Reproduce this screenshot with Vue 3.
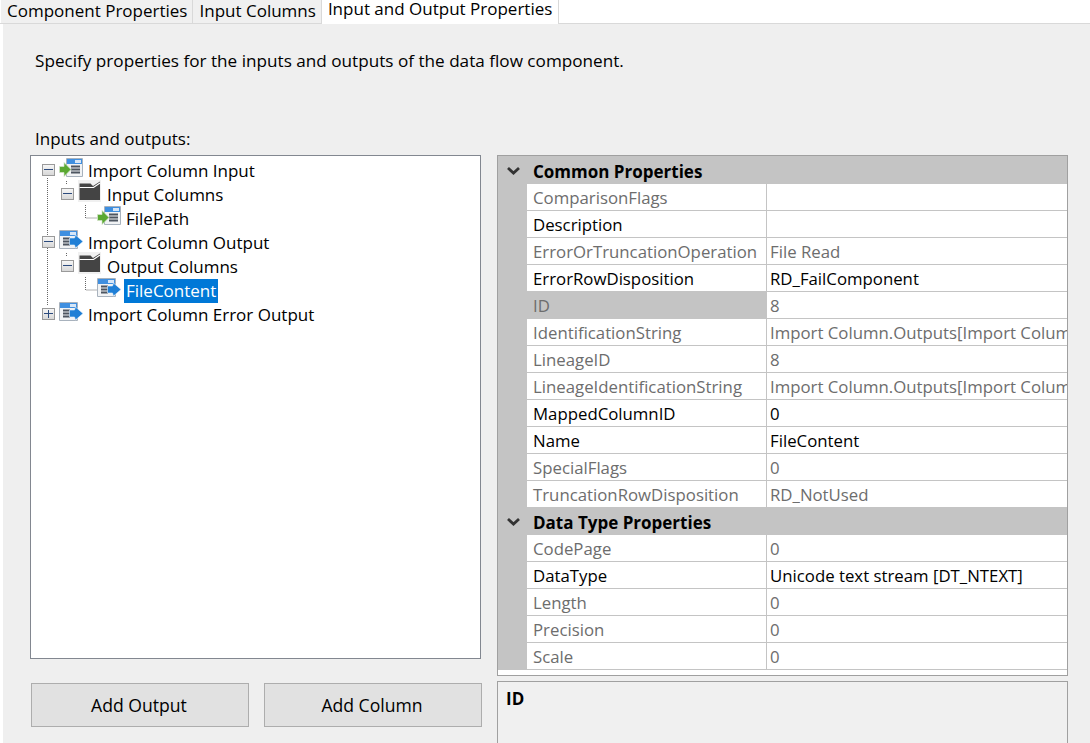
<script setup>
const tabs = [
  { label: 'Component Properties' },
  { label: 'Input Columns' },
  { label: 'Input and Output Properties', active: true }
]

const tree = [
  { label: 'Import Column Input', depth: 0, toggle: '-', icon: 'input' },
  { label: 'Input Columns', depth: 1, toggle: '-', icon: 'folder' },
  { label: 'FilePath', depth: 2, icon: 'input' },
  { label: 'Import Column Output', depth: 0, toggle: '-', icon: 'output' },
  { label: 'Output Columns', depth: 1, toggle: '-', icon: 'folder' },
  { label: 'FileContent', depth: 2, icon: 'output', selected: true },
  { label: 'Import Column Error Output', depth: 0, toggle: '+', icon: 'output' }
]

const groups = [
  {
    title: 'Common Properties',
    rows: [
      { name: 'ComparisonFlags', value: '', off: true },
      { name: 'Description', value: '' },
      { name: 'ErrorOrTruncationOperation', value: 'File Read', off: true },
      { name: 'ErrorRowDisposition', value: 'RD_FailComponent' },
      { name: 'ID', value: '8', off: true, current: true },
      { name: 'IdentificationString', value: 'Import Column.Outputs[Import Column Output].Columns[FileContent]', off: true },
      { name: 'LineageID', value: '8', off: true },
      { name: 'LineageIdentificationString', value: 'Import Column.Outputs[Import Column Output].Columns[FileContent]', off: true },
      { name: 'MappedColumnID', value: '0' },
      { name: 'Name', value: 'FileContent' },
      { name: 'SpecialFlags', value: '0', off: true },
      { name: 'TruncationRowDisposition', value: 'RD_NotUsed', off: true }
    ]
  },
  {
    title: 'Data Type Properties',
    rows: [
      { name: 'CodePage', value: '0', off: true },
      { name: 'DataType', value: 'Unicode text stream [DT_NTEXT]' },
      { name: 'Length', value: '0', off: true },
      { name: 'Precision', value: '0', off: true },
      { name: 'Scale', value: '0', off: true }
    ]
  }
]
</script>

<template>
  <div class="page">
    <div class="tabs">
      <div v-for="tab in tabs" :key="tab.label" class="tab" :class="{ active: tab.active }">{{ tab.label }}</div>
    </div>

    <div class="body">
      <p class="intro">Specify properties for the inputs and outputs of the data flow component.</p>

      <div class="columns">
        <div class="left">
          <div class="caption">Inputs and outputs:</div>
          <div class="tree">
            <svg class="lines" width="120" height="170" fill="none" stroke="#666" stroke-dasharray="1 1">
              <path d="M16.500 22V149" />
              <path d="M35.500 25V28" />
              <path d="M54.500 49V62H66" />
              <path d="M35.500 97V100" />
              <path d="M54.500 121V134H66" />
            </svg>
            <div v-for="item in tree" :key="item.label" class="node" :style="{ paddingLeft: 11 + item.depth * 19 + 'px' }">
              <span v-if="item.toggle" class="toggle">
                <i class="dash"></i>
                <i v-if="item.toggle === '+'" class="bar"></i>
              </span>
              <span v-else class="no-toggle"></span>

              <svg v-if="item.icon === 'folder'" class="icon" width="25" height="24" viewBox="0 0 25 24">
                <path d="M0 1h23v22H0z" fill="#f0f0f0" />
                <path d="M1.500 21V4.500h11L15 7l7-4.500V21z" fill="#444" />
                <path d="M1.500 8.500H15.500L22 4" fill="none" stroke="#fff" stroke-width="1.200" />
              </svg>
              <svg v-else-if="item.icon === 'input'" class="icon" width="25" height="24" viewBox="0 0 25 24">
                <path d="M7.500 3.500h16v18h-16z" fill="#f1f3f5" stroke="#a8b2bd" />
                <path d="M8 4h15v5H8z" fill="#3f8fe0" />
                <path d="M16 5h6v3h-6z" fill="#d5e6f8" />
                <path d="M12 11.500h9M12 14.500h9M12 17.500h9" stroke="#4d5560" stroke-width="2" />
                <path d="M.5 11.500h4.500V7.500l7 7-7 7v-4H.5z" fill="#5aa832" stroke="#d6e4cb" stroke-width=".7" />
              </svg>
              <svg v-else class="icon" width="25" height="24" viewBox="0 0 25 24">
                <path d="M.5 3.500h18v18H.5z" fill="#f1f3f5" stroke="#a8b2bd" />
                <path d="M1 4h17v5H1z" fill="#3f8fe0" />
                <path d="M11 5h6v3h-6z" fill="#d5e6f8" />
                <path d="M4 11.500h7M4 14.500h7M4 17.500h7" stroke="#4d5560" stroke-width="2" />
                <path d="M10.500 11l5 0 1-3 7.500 6.500-7.500 6.500-1-3h-5z" fill="#1f7fd6" stroke="#e8f1fa" stroke-width=".6" />
              </svg>

              <span class="label" :class="{ selected: item.selected }">{{ item.label }}</span>
            </div>
          </div>
          <div class="buttons">
            <button class="btn">Add Output</button>
            <button class="btn">Add Column</button>
          </div>
        </div>

        <div class="right">
          <div class="grid">
            <template v-for="group in groups" :key="group.title">
              <div class="group">
                <svg class="chevron" width="30" height="27" viewBox="0 0 30 27">
                  <path d="M10 11l5.500 5 5.500-5" fill="none" stroke="#333" stroke-width="2.800" />
                </svg>
                <span>{{ group.title }}</span>
              </div>
              <div v-for="row in group.rows" :key="row.name" class="row">
                <div class="name" :class="{ off: row.off, current: row.current }">{{ row.name }}</div>
                <div class="value" :class="{ off: row.off }">{{ row.value }}</div>
              </div>
            </template>
          </div>
          <div class="help">ID</div>
        </div>
      </div>
    </div>
  </div>
</template>

<style>
html,
body {
  margin: 0;
  background: #fff;
  overflow: hidden;
}
</style>

<style scoped>
.page {
  width: 1090px;
  height: 743px;
  overflow: hidden;
  background: #fff;
  font-family: 'Open Sans', 'Noto Sans', sans-serif;
  font-size: 17px;
  color: #000;
}
.tabs {
  display: flex;
  height: 23px;
  padding-left: 1px;
  border-bottom: 1px solid #d9d9d9;
}
.tab {
  height: 23px;
  line-height: 21px;
  padding: 0 5px 0 6px;
  background: #f0f0f0;
  border-right: 1px solid #d9d9d9;
  white-space: nowrap;
}
.tab.active {
  height: 24px;
  margin-left: 0;
  padding: 0 6px;
  line-height: 18px;
  background: #fff;
  position: relative;
  z-index: 1;
}
.body {
  height: 719px;
  margin-left: 3px;
  background: #efefef;
  padding-left: 27px;
  box-sizing: border-box;
}
.intro {
  margin: 0;
  padding: 25px 0 0 5px;
  height: 105px;
  box-sizing: border-box;
  line-height: 24px;
  font-size: 17.15px;
}
.columns {
  display: flex;
  gap: 15px;
}
.left {
  width: 452px;
}
.caption {
  height: 26px;
  line-height: 20px;
  padding-left: 5px;
}
.tree {
  position: relative;
  box-sizing: border-box;
  height: 504px;
  width: 451px;
  padding-top: 3px;
  background: #fff;
  border: 1px solid #828790;
}
.lines {
  position: absolute;
  left: 0;
  top: 0;
}
.node {
  position: relative;
  display: flex;
  align-items: center;
  height: 24px;
}
.toggle {
  position: relative;
  box-sizing: border-box;
  flex: none;
  width: 13px;
  height: 12px;
  margin-top: -2px;
  margin-right: 4px;
  background: linear-gradient(#f6f6f6, #d8d8d8);
  border: 1px solid #9a9a9a;
}
.dash {
  position: absolute;
  left: 1px;
  right: 1px;
  top: 4px;
  height: 1px;
  background: #2b4a7d;
}
.bar {
  position: absolute;
  top: 1px;
  bottom: 1px;
  left: 5px;
  width: 1px;
  background: #2b4a7d;
}
.no-toggle {
  flex: none;
  width: 17px;
}
.icon {
  flex: none;
  margin-right: 2px;
  margin-bottom: 8px;
  overflow: visible;
}
.label {
  height: 24px;
  line-height: 23px;
  padding: 0 2px;
  white-space: nowrap;
}
.label.selected {
  background: #0078d7;
  color: #fff;
}
.buttons {
  display: flex;
  gap: 15px;
  margin-top: 24px;
  padding-left: 1px;
}
.btn {
  width: 218px;
  height: 44px;
  padding: 0 2px 0 0;
  font: inherit;
  font-size: 17.6px;
  color: #000;
  background: #e1e1e1;
  border: 1px solid #adadad;
}
.right {
  flex: none;
  width: 571px;
}
.grid {
  box-sizing: border-box;
  width: 571px;
  height: 521px;
  margin-top: 26px;
  background: #fff;
  border: 1px solid #a0a0a0;
  overflow: hidden;
}
.group {
  display: flex;
  align-items: center;
  height: 27px;
  background: #c4c4c4;
  font-weight: 700;
}
.group:first-child {
  height: 28px;
}
.group span {
  padding-top: 3px;
  line-height: 24px;
}
.chevron {
  flex: none;
  margin-right: 5px;
}
.row {
  display: flex;
  height: 27px;
  line-height: 28px;
  background: #c4c4c4;
  padding-left: 29px;
  font-size: 16.8px;
}
.name,
.value {
  box-sizing: border-box;
  height: 27px;
  padding-left: 6px;
  white-space: nowrap;
  overflow: hidden;
  background: #fff;
  border-bottom: 1px solid #c4c4c4;
}
.name {
  flex: none;
  width: 240px;
  border-right: 1px solid #c4c4c4;
}
.value {
  flex: 1;
  min-width: 0;
  padding-left: 3px;
}
.name.current {
  background: #c4c4c4;
}
.off {
  color: #6d6d6d;
}
.help {
  box-sizing: border-box;
  width: 571px;
  height: 70px;
  margin-top: 5px;
  padding: 5px 8px;
  background: #f0f0f0;
  border: 1px solid #a0a0a0;
  font-weight: 700;
}
</style>
